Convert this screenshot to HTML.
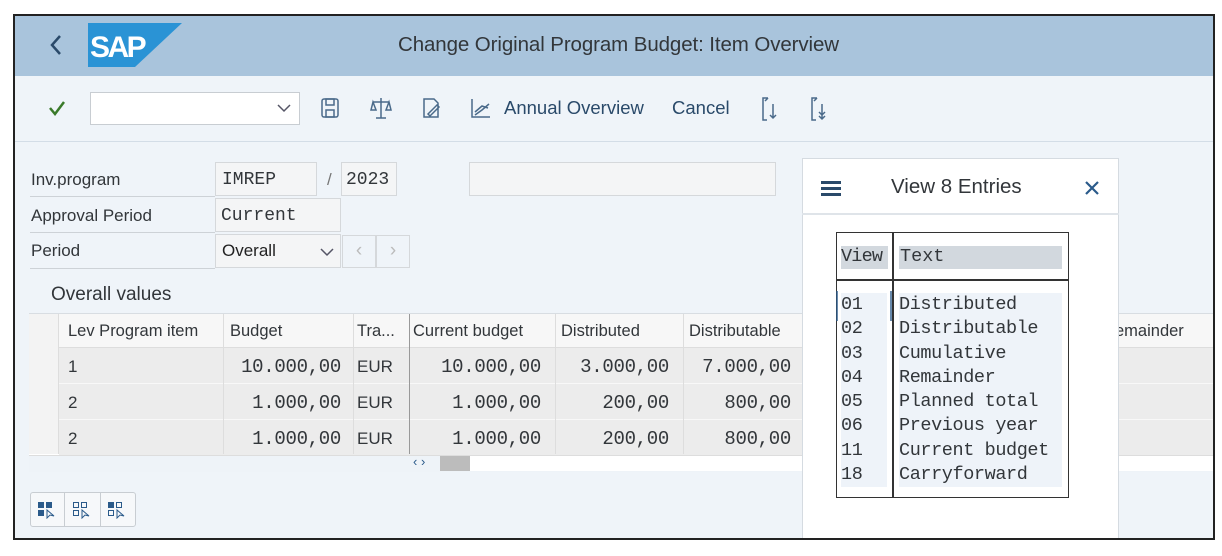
<!DOCTYPE html>
<html><head><meta charset="utf-8"><style>
*{margin:0;padding:0;box-sizing:border-box}
body{width:1222px;height:556px;background:#fff;position:relative;overflow:hidden;font-family:"Liberation Sans",sans-serif;color:#32363a}
.a{position:absolute}
.frame{left:13px;top:14px;width:1202px;height:526px;border:2px solid #222;background:#eff4f9;overflow:hidden}
.mono{font-family:"Liberation Mono",monospace}
.t{font-size:17px;color:#32363a}
.box{background:#f4f5f6;border:1px solid #d5d8db}
.hl{border-bottom:1px solid #cdd2d7}
.cell{position:absolute;font-size:16px;white-space:nowrap}
.v{font-size:19px;letter-spacing:-0.3px}
</style></head><body>
<div class="a frame">
 <div class="a" style="left:0;top:0;width:1200px;height:60px;background:#a9c4dc"></div>
 <svg class="a" style="left:34px;top:18px" width="14" height="22"><path d="M11 2 L3 11 L11 20" stroke="#2a4a6a" stroke-width="2.5" fill="none"/></svg>
 <svg class="a" style="left:73px;top:7px" width="94" height="44"><polygon points="0,0 94,0 47,44 0,44" fill="#2a93d5"/><text x="2" y="34" font-family="Liberation Sans" font-weight="bold" font-size="30" fill="#fff" letter-spacing="-2.5">SAP</text></svg>
 <div class="a" style="left:383px;top:17px;font-size:20.5px;color:#32363a;letter-spacing:-0.1px">Change Original Program Budget: Item Overview</div>
 <div class="a" style="left:0;top:125px;width:1200px;height:1px;background:#d3dde7"></div>
 <svg class="a" style="left:33px;top:84px" width="18" height="16"><path d="M2 8 L7 14 L16 2" stroke="#3a7a2a" stroke-width="2.5" fill="none"/></svg>
 <div class="a" style="left:75px;top:76px;width:210px;height:33px;background:#fff;border:1px solid #c8cdd2"></div>
 <svg class="a" style="left:262px;top:88px" width="14" height="9"><path d="M1 1 L7 7 L13 1" stroke="#556" stroke-width="1.5" fill="none"/></svg>
 <svg class="a" style="left:305px;top:81px" width="20" height="22" fill="none" stroke="#4a6a8a" stroke-width="1.5"><rect x="2" y="2" width="16" height="18" rx="2"/><rect x="6" y="2" width="8" height="6"/><rect x="6" y="13" width="8" height="7"/></svg>
 <svg class="a" style="left:355px;top:80px" width="22" height="24" fill="none" stroke="#4a6a8a" stroke-width="1.5"><path d="M11 2 V22 M6 22 H16 M3 6 H19 M3 6 L1 14 H6 Z M19 6 L16 14 H21 Z"/></svg>
 <svg class="a" style="left:404px;top:80px" width="24" height="24" fill="none" stroke="#4a6a8a" stroke-width="1.5"><path d="M5 3 H15 L19 7 V21 H5 Z M9 18 L18 9 L20 11 L11 20 Z"/></svg>
 <svg class="a" style="left:455px;top:81px" width="22" height="22" fill="none" stroke="#4a6a8a" stroke-width="1.5"><path d="M2 2 V20 H20 M5 15 L12 9 L18 11 M5 18 L12 13 L19 7"/></svg>
 <div class="a" style="left:489px;top:81px;font-size:18.5px;color:#2a4a6a">Annual Overview</div>
 <div class="a" style="left:657px;top:81px;font-size:18.5px;color:#2a4a6a">Cancel</div>
 <svg class="a" style="left:745px;top:80px" width="22" height="26" fill="none" stroke="#4a6a8a" stroke-width="1.5"><path d="M8 2 H3 V24 H7 M8 2 L5 5 M13 8 V22 M10 19 L13 22 L16 19"/></svg>
 <svg class="a" style="left:794px;top:80px" width="22" height="26" fill="none" stroke="#4a6a8a" stroke-width="1.5"><path d="M8 2 H3 V24 H7 M8 2 L5 5 M13 8 V22 M10 16 L13 19 L16 16 M10 20 L13 23 L16 20"/></svg>

 <div class="a hl" style="left:15px;top:150px;width:185px;height:31px"></div>
 <div class="a t" style="left:16px;top:154px">Inv.program</div>
 <div class="a box mono" style="left:200px;top:146px;width:102px;height:34px;font-size:18px;padding:7px 6px">IMREP</div>
 <div class="a t" style="left:312px;top:154px;color:#777">/</div>
 <div class="a box mono" style="left:326px;top:146px;width:56px;height:34px;font-size:18px;padding:7px 4px">2023</div>
 <div class="a box" style="left:454px;top:146px;width:307px;height:34px"></div>
 <div class="a hl" style="left:15px;top:185px;width:185px;height:32px"></div>
 <div class="a t" style="left:16px;top:190px">Approval Period</div>
 <div class="a box mono" style="left:200px;top:182px;width:126px;height:34px;font-size:18px;padding:7px 5px">Current</div>
 <div class="a hl" style="left:15px;top:222px;width:185px;height:31px"></div>
 <div class="a t" style="left:16px;top:225px">Period</div>
 <div class="a box" style="left:200px;top:218px;width:126px;height:34px;font-size:17px;padding:6px 6px;color:#222">Overall<svg style="position:absolute;left:104px;top:13px" width="14" height="9"><path d="M1 1 L7 7 L13 1" stroke="#556" stroke-width="1.5" fill="none"/></svg></div>
 <div class="a" style="left:327px;top:219px;width:34px;height:33px;border:1px solid #d5d8db;color:#bbb;text-align:center;font-size:19px;line-height:30px">&#8249;</div>
 <div class="a" style="left:361px;top:219px;width:34px;height:33px;border:1px solid #d5d8db;color:#bbb;text-align:center;font-size:19px;line-height:30px">&#8250;</div>

 <div class="a" style="left:36px;top:268px;font-size:19px;color:#32363a">Overall values</div>
 <div class="a" style="left:14px;top:297px;width:1186px;height:158px;background:#fff;border-top:1px solid #d8dde2"></div>
 <div class="a" style="left:44px;top:298px;width:1156px;height:34px;background:#f7f7f7;border-bottom:1px solid #ddd"></div>
 <div class="a" style="left:14px;top:298px;width:30px;height:140px;background:#f3f3f3;border-right:1px solid #ddd"></div>
 <div class="a" style="left:44px;top:332px;width:1156px;height:107px;background:#ececec"></div>
 <div class="a" style="left:44px;top:367px;width:1156px;height:1px;background:#f8f8f8"></div>
 <div class="a" style="left:44px;top:403px;width:1156px;height:1px;background:#f8f8f8"></div>
 <div class="a" style="left:14px;top:439px;width:1186px;height:17px;background:#eef3f8;border-top:1px solid #ddd"></div>
 <div class="a" style="left:425px;top:440px;width:30px;height:15px;background:#bcbcbc"></div>
 <div class="a" style="left:455px;top:440px;width:745px;height:15px;background:#fff"></div>
 <div class="a" style="left:398px;top:438px;font-size:13px;color:#2a5a8a">&#8249; &#8250;</div>
 <div class="a" style="left:208px;top:298px;width:1px;height:140px;background:#ddd"></div>
 <div class="a" style="left:338px;top:298px;width:1px;height:140px;background:#ddd"></div>
 <div class="a" style="left:394px;top:298px;width:1px;height:140px;background:#999"></div>
 <div class="a" style="left:540px;top:298px;width:1px;height:140px;background:#ddd"></div>
 <div class="a" style="left:668px;top:298px;width:1px;height:140px;background:#ddd"></div>
 <div class="cell" style="left:53px;top:306px;font-size:16.5px">Lev Program item</div>
 <div class="cell" style="left:215px;top:306px;font-size:16.5px">Budget</div>
 <div class="cell" style="left:342px;top:306px;font-size:16.5px">Tra...</div>
 <div class="cell" style="left:398px;top:306px;font-size:16.5px">Current budget</div>
 <div class="cell" style="left:546px;top:306px;font-size:16.5px">Distributed</div>
 <div class="cell" style="left:674px;top:306px;font-size:16.5px">Distributable</div>
 <div class="cell" style="left:1100px;top:306px;font-size:16.5px">emainder</div>
 <div class="cell" style="left:53px;top:341px;font-size:17px">1</div>
 <div class="cell" style="left:53px;top:377px;font-size:17px">2</div>
 <div class="cell" style="left:53px;top:413px;font-size:17px">2</div>
 <div class="cell mono v" style="right:872px;top:340px">10.000,00</div>
 <div class="cell mono v" style="right:872px;top:376px">1.000,00</div>
 <div class="cell mono v" style="right:872px;top:412px">1.000,00</div>
 <div class="cell" style="left:342px;top:341px;font-size:17px">EUR</div>
 <div class="cell" style="left:342px;top:377px;font-size:17px">EUR</div>
 <div class="cell" style="left:342px;top:413px;font-size:17px">EUR</div>
 <div class="cell mono v" style="right:672px;top:340px">10.000,00</div>
 <div class="cell mono v" style="right:672px;top:376px">1.000,00</div>
 <div class="cell mono v" style="right:672px;top:412px">1.000,00</div>
 <div class="cell mono v" style="right:544px;top:340px">3.000,00</div>
 <div class="cell mono v" style="right:544px;top:376px">200,00</div>
 <div class="cell mono v" style="right:544px;top:412px">200,00</div>
 <div class="cell mono v" style="right:422px;top:340px">7.000,00</div>
 <div class="cell mono v" style="right:422px;top:376px">800,00</div>
 <div class="cell mono v" style="right:422px;top:412px">800,00</div>

 <div class="a" style="left:15px;top:476px;width:106px;height:35px;border:1px solid #c8cdd2;border-radius:3px;background:#f6f8fa"></div>
 <div class="a" style="left:49px;top:476px;width:1px;height:35px;background:#c8cdd2"></div>
 <div class="a" style="left:85px;top:476px;width:1px;height:35px;background:#c8cdd2"></div>
 <svg class="a" style="left:22px;top:485px" width="22" height="18"><rect x="1" y="1" width="6" height="6" fill="#2a5a8a"/><rect x="9" y="1" width="6" height="6" fill="#2a5a8a"/><rect x="1" y="9" width="6" height="6" fill="#2a5a8a"/><path d="M10 9 L10 17 L13 14 L17 15 Z" fill="none" stroke="#2a5a8a"/></svg>
 <svg class="a" style="left:57px;top:485px" width="22" height="18" fill="none" stroke="#2a5a8a"><rect x="1.5" y="1.5" width="5" height="5"/><rect x="9.5" y="1.5" width="5" height="5"/><rect x="1.5" y="9.5" width="5" height="5"/><path d="M10 9 L10 17 L13 14 L17 15 Z"/></svg>
 <svg class="a" style="left:92px;top:485px" width="22" height="18"><rect x="1" y="1" width="6" height="6" fill="#2a5a8a"/><rect x="9.5" y="1.5" width="5" height="5" fill="none" stroke="#2a5a8a"/><rect x="1.5" y="9.5" width="5" height="5" fill="none" stroke="#2a5a8a"/><path d="M10 9 L10 17 L13 14 L17 15 Z" fill="none" stroke="#2a5a8a"/></svg>

 <div class="a" style="left:787px;top:142px;width:317px;height:390px;background:#fff;border:1px solid #d5dbe1"></div>
 <div class="a" style="left:787px;top:197px;width:317px;height:2px;background:#dfe4e9"></div>
 <div class="a" style="left:806px;top:165px;width:20px;height:2.5px;background:#2a4a6a;box-shadow:0 6px 0 #2a4a6a,0 12px 0 #2a4a6a"></div>
 <div class="a" style="left:876px;top:159px;font-size:20.5px;color:#32363a">View 8 Entries</div>
 <svg class="a" style="left:1069px;top:164px" width="16" height="16"><path d="M2 2 L14 14 M14 2 L2 14" stroke="#2a5a8a" stroke-width="2.2"/></svg>
 <div class="a" style="left:821px;top:216px;width:233px;height:266px;border:1.5px solid #333"></div>
 <div class="a" style="left:877px;top:216px;width:1.5px;height:266px;background:#333"></div>
 <div class="a" style="left:821px;top:263px;width:233px;height:1.5px;background:#333"></div>
 <div class="a mono" style="left:826px;top:230px;width:47px;height:23px;background:#d2d8de;font-size:18.5px;padding:0;letter-spacing:-0.8px;overflow:hidden;white-space:nowrap">View</div>
 <div class="a mono" style="left:884px;top:230px;width:163px;height:23px;background:#d2d8de;font-size:18.5px;padding:0 1px">Text</div>
 <div class="a mono" style="left:826px;top:277px;font-size:18.5px;line-height:24.3px;width:46px;background:#eef3f9;letter-spacing:-0.4px">01<br>02<br>03<br>04<br>05<br>06<br>11<br>18</div>
 <div class="a mono" style="left:884px;top:277px;font-size:18.5px;line-height:24.3px;width:163px;background:#eef3f9;letter-spacing:-0.4px;white-space:nowrap">Distributed<br>Distributable<br>Cumulative<br>Remainder<br>Planned total<br>Previous year<br>Current budget<br>Carryforward</div>
 <div class="a" style="left:821px;top:275px;width:56px;height:30px;border:2px solid #2a5a8a;border-top:none;border-bottom:none;opacity:.7"></div>
</div>
</body></html>
